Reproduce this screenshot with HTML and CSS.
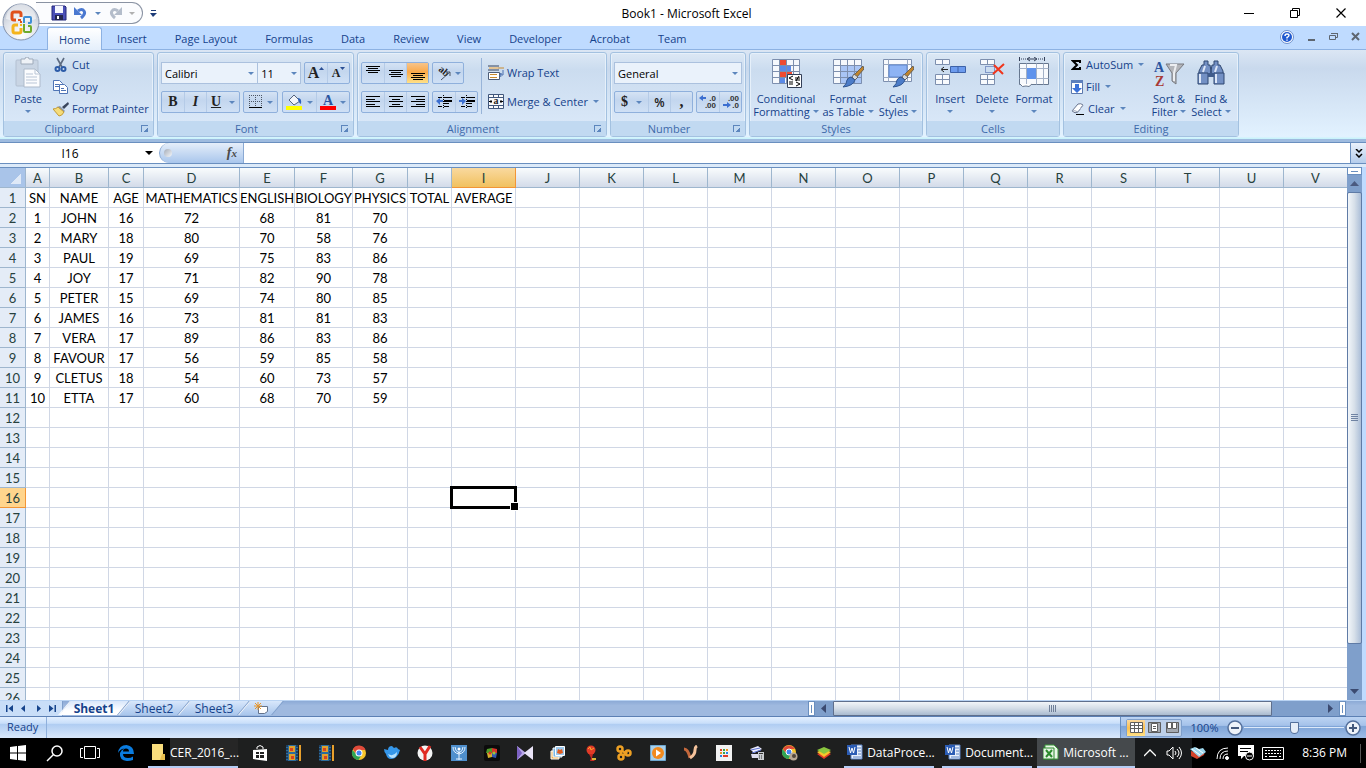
FILE: index.html
```html
<!DOCTYPE html>
<html lang="en">
<head>
    <meta charset="UTF-8">
    <title>Book1 - Microsoft Excel</title>
    <link rel="stylesheet" href="styles.css">
</head>
<body>
<header class="titlebar">
    <button class="office" aria-label="Office Button">
        <svg width="38" height="38" viewBox="0 0 38 38">
            <defs>
                <radialGradient id="orb" cx="50%" cy="85%" r="85%">
                    <stop offset="0" stop-color="#ffffff"/><stop offset=".55" stop-color="#dfe3ea"/><stop offset="1" stop-color="#b4bccb"/>
                </radialGradient>
            </defs>
            <circle cx="19" cy="19" r="18" fill="url(#orb)" stroke="#8492ab"/>
            <path d="M4 16a15 15 0 0 1 30 0q-15 5-30 0z" fill="#fff" opacity=".5"/>
            <g fill="none" stroke-width="3">
                <path d="M14 17h-2q-2 0-2-2v-4q0-2 2-2h5q2 0 2 2v3" stroke="#e0501a"/>
                <path d="M16 17h3" stroke="#e0501a" stroke-width="2"/>
                <path d="M22 18v-3q0-1 1-1h5q1 0 1 1v4q0 1-1 1h-2" stroke="#3f8fd6" stroke-width="2"/>
                <path d="M16 22h-3q-2 0-2 2v4q0 2 2 2h4q2 0 2-2v-3" stroke="#f4b41c"/>
                <path d="M22 23v5q0 1 1 1h5q1 0 1-1v-4q0-1-1-1h-2" stroke="#6fab2c" stroke-width="2"/>
            </g>
            <path d="M18 18h2v2h-2z" fill="#e0501a"/><path d="M21 18h2v2h-2z" fill="#3f8fd6"/><path d="M18 21h2v2h-2z" fill="#f4b41c"/><path d="M21 21h2v2h-2z" fill="#6fab2c"/>
        </svg>
    </button>
    <div class="qat">
        <button aria-label="Save">
            <svg width="16" height="16"><path d="M1 1h13l1 1v13H1z" fill="#4a4fb8" stroke="#25287a"/><path d="M4 1h8v7H4z" fill="#f4f6ff"/><path d="M4 10h8v5H4z" fill="#23264f"/><path d="M6 11h2v3H6z" fill="#fff"/></svg>
        </button>
        <button aria-label="Undo">
            <svg width="14" height="14"><path d="M4 5q4-3 6 0 2 3-3 7" fill="none" stroke="#4a78d0" stroke-width="3"/><path d="M0 1v8h8z" fill="#4a78d0"/></svg>
        </button>
        <i class="caret"></i>
        <button aria-label="Redo">
            <svg width="14" height="14"><path d="M10 5q-4-3-6 0-2 3 3 7" fill="none" stroke="#b4bdcb" stroke-width="3"/><path d="M14 1v8H6z" fill="#b4bdcb"/></svg>
        </button>
        <i class="caret off"></i>
    </div>
    <button class="customize" aria-label="Customize Quick Access Toolbar"><svg width="7" height="7"><path d="M1 0h5v1H1zM0 3h7L3 7z" fill="#1e3c78"/></svg></button>
    <h1>Book1 - Microsoft Excel</h1>
    <div class="winbtns">
        <button aria-label="Minimize"><svg width="11" height="11"><path d="M0 5.500h10" stroke="#000"/></svg></button>
        <button aria-label="Restore"><svg width="11" height="11" fill="none" stroke="#000"><path d="M.5 2.500h7v7h-7zM2.500 2.500v-2h7v7h-2"/></svg></button>
        <button aria-label="Close"><svg width="11" height="11"><path d="M.5.5l9 9M9.500.5l-9 9" stroke="#000" stroke-width="1.200"/></svg></button>
    </div>
</header>

<nav class="tabs">
    <a href="#" class="active">Home</a>
    <a href="#">Insert</a>
    <a href="#">Page Layout</a>
    <a href="#">Formulas</a>
    <a href="#">Data</a>
    <a href="#">Review</a>
    <a href="#">View</a>
    <a href="#">Developer</a>
    <a href="#">Acrobat</a>
    <a href="#">Team</a>
    <div class="docbtns">
        <button aria-label="Help"><svg width="14" height="14"><circle cx="7" cy="7" r="6.500" fill="#fff" stroke="#6d8fcb"/><circle cx="7" cy="7" r="5" fill="#2059cf"/><path d="M5 6q0-2 2-2t2 1.500q0 1-2 2v1M7 9.500v1.300" fill="none" stroke="#fff" stroke-width="1.400"/></svg></button>
        <button aria-label="Minimize workbook"><svg width="9" height="9"><path d="M1 7h7v2H1z" fill="#5e6670"/></svg></button>
        <button aria-label="Restore workbook"><svg width="9" height="9" fill="none" stroke="#5e6670"><path d="M.5 3.500h6v4h-6zM2.500 1.500h6v4h-2M2 1.500h7"/></svg></button>
        <button aria-label="Close workbook"><svg width="9" height="9"><path d="M1 1l7 7M8 1l-7 7" stroke="#5e6670" stroke-width="2"/></svg></button>
    </div>
</nav>

<div class="ribbon">
    <section class="group g-clipboard">
        <div class="body">
            <button class="big paste">
                <svg width="32" height="32"><rect x="4" y="3" width="22" height="26" rx="1" fill="#c9d5e4" stroke="#b3c0d1"/><path d="M9 2h4a2 2 0 0 1 4 0h4v5H9z" fill="#eef2f7" stroke="#9fabba"/><path d="M12 12h11l5 5v13H12z" fill="#fbfcfe" stroke="#adbacb"/><path d="M23 12v5h5M14 17h7M14 20h11M14 23h11M14 26h11" fill="none" stroke="#b9c5d6"/></svg>
                <span>Paste</span><i class="caret"></i>
            </button>
            <div class="stack">
                <button class="small"><svg width="16" height="16"><path d="M4 1l5 9M11 1L6 10" stroke="#5d6b80" stroke-width="1.600"/><g fill="none" stroke="#2d5ca8" stroke-width="2"><circle cx="4.500" cy="12" r="2"/><circle cx="10.500" cy="12" r="2"/></g></svg>Cut</button>
                <button class="small"><svg width="16" height="16" stroke="#4f74b5"><path d="M.5 1.500h6l3 3v7h-9z" fill="#fff"/><path d="M2 5.500h4M2 7.500h4" /><path d="M6.500 5.500h5l3 3v6h-8z" fill="#fff"/><path d="M8 9.500h3M8 11.500h5"/></svg>Copy</button>
                <button class="small"><svg width="16" height="16"><path d="M15 1l-6 5 2 2 5-5z" fill="#39455c"/><path d="M7 5l5 5-2 2-6-6z" fill="#8a97ad"/><path d="M5 6l6 5q-2 4-5 4L0 8q3 0 5-2z" fill="#f5dc7a" stroke="#c39b35"/></svg>Format Painter</button>
            </div>
        </div>
        <footer>Clipboard<button class="launch" aria-label="Clipboard options"></button></footer>
    </section>

    <section class="group g-font">
        <div class="body rows">
            <div class="row">
                <select class="pick name" aria-label="Font"><option>Calibri</option></select>
                <select class="pick size" aria-label="Font size"><option>11</option></select>
                <div class="set push">
                    <button class="serif lg">A<svg width="5" height="3"><path d="M0 3h5L2.500 0z" fill="#2b4f94"/></svg></button>
                    <button class="serif sm">A<svg width="5" height="3"><path d="M0 0h5L2.500 3z" fill="#2b4f94"/></svg></button>
                </div>
            </div>
            <div class="row">
                <div class="set">
                    <button class="serif">B</button>
                    <button class="serif"><em>I</em></button>
                    <button class="serif wide"><u>U</u><i class="caret"></i></button>
                </div>
                <div class="set">
                    <button class="wide" aria-label="Borders"><svg width="14" height="14"><path d="M.5 0v12M6.500 0v12M12.500 0v12M0 .5h13M0 6.500h13" stroke="#4c5664" stroke-dasharray="1 1"/><path d="M0 12h13v1H0z" fill="#000"/></svg><i class="caret"></i></button>
                </div>
                <div class="set push">
                    <button class="wide" aria-label="Fill color"><svg width="17" height="16"><path d="M3 6l5-5 6 6-6 4z" fill="#f2f5fa" stroke="#53647f"/><path d="M12 4q4 0 3 6-2-1-3-4z" fill="#2e62b8"/><path d="M0 12h16v4H0z" fill="#ffff00"/></svg><i class="caret"></i></button>
                    <button class="wide" aria-label="Font color"><svg width="16" height="16"><text x="8" y="11" text-anchor="middle" class="glyph blue">A</text><path d="M0 12h16v4H0z" fill="#ff0000"/></svg><i class="caret"></i></button>
                </div>
            </div>
        </div>
        <footer>Font<button class="launch" aria-label="Font options"></button></footer>
    </section>

    <section class="group g-align">
        <div class="body">
            <div class="rows aligns">
                <div class="row">
                    <div class="set">
                        <button aria-label="Top align"><svg width="14" height="16"><path d="M0 1.500h14M2 3.500h10M0 5.500h14M2 7.500h10" stroke="#000"/></svg></button>
                        <button aria-label="Middle align"><svg width="14" height="16"><path d="M0 5.500h14M2 7.500h10M0 9.500h14M2 11.500h10" stroke="#000"/></svg></button>
                        <button class="on" aria-label="Bottom align"><svg width="14" height="16"><path d="M0 8.500h14M2 10.500h10M0 12.500h14M2 14.500h10" stroke="#000"/></svg></button>
                    </div>
                    <div class="set">
                        <button class="orient" aria-label="Orientation"><svg width="18" height="18"><text x="3" y="10" class="glyph tiny" transform="rotate(40 8 8)">ab</text><path d="M6 16l9-8M15 8h-4M15 8v4" fill="none" stroke="#4c5664"/></svg><i class="caret"></i></button>
                    </div>
                </div>
                <div class="row">
                    <div class="set">
                        <button aria-label="Align left"><svg width="14" height="12"><path d="M0 .5h14M0 3.500h9M0 5.500h14M0 8.500h9M0 10.500h14" stroke="#000"/></svg></button>
                        <button aria-label="Center"><svg width="14" height="12"><path d="M0 .5h14M3 3.500h8M0 5.500h14M3 8.500h8M0 10.500h14" stroke="#000"/></svg></button>
                        <button aria-label="Align right"><svg width="14" height="12"><path d="M0 .5h14M5 3.500h9M0 5.500h14M5 8.500h9M0 10.500h14" stroke="#000"/></svg></button>
                    </div>
                    <div class="set">
                        <button aria-label="Decrease indent"><svg width="16" height="14"><path d="M2 2.500h4M8 2.500h8M2 11.500h4M8 11.500h5M8 8.500h5" stroke="#000"/><path d="M8 5h8v2H8z"/><path d="M7.500 0v14" stroke="#000" stroke-dasharray="1 1"/><path d="M4 3L0 6l4 4V7h3V5H4z" fill="#3c6fd0"/></svg></button>
                        <button aria-label="Increase indent"><svg width="16" height="14"><path d="M2 2.500h4M8 2.500h8M2 11.500h4M8 11.500h5M8 8.500h5" stroke="#000"/><path d="M8 5h8v2H8z"/><path d="M7.500 0v14" stroke="#000" stroke-dasharray="1 1"/><path d="M3 3l4 3-4 4V7H0V5h3z" fill="#3c6fd0"/></svg></button>
                    </div>
                </div>
            </div>
            <div class="rows">
                <button class="small"><svg width="16" height="16"><path d="M0 1h11M0 5h11" stroke="#39455c"/><path d="M1 2h9v2H1z" fill="#fff"/><path d="M1 3h15" stroke="#c98a2d"/><path d="M.5 7.500h11v7H.5z" fill="#fff" stroke="#4d5d78"/><path d="M2 9.500h7M2 12.500h7" stroke="#c98a2d"/><path d="M15 5v5h-2l0-2-1 2 1 2" fill="none" stroke="#4a6fae"/></svg>Wrap Text</button>
                <button class="small"><svg width="16" height="16"><path d="M.5.5h15v14H.5zM.5 3.500h15M.5 11.500h15M5.500.5v3M10.500.5v3M5.500 11.500v3M10.500 11.500v3" fill="#f7f9fc" stroke="#41577c"/><path d="M1 7.500h3M12 7.500h3M3 6v3M13 6v3" stroke="#000"/><text x="8" y="10" text-anchor="middle" class="glyph tiny">a</text></svg>Merge &amp; Center<i class="caret"></i></button>
            </div>
        </div>
        <footer>Alignment<button class="launch" aria-label="Alignment options"></button></footer>
    </section>

    <section class="group g-number">
        <div class="body rows">
            <div class="row"><select class="pick format" aria-label="Number format"><option>General</option></select></div>
            <div class="row">
                <div class="set">
                    <button class="serif wide">$<i class="caret"></i></button>
                    <button class="pct">%</button>
                    <button class="serif lg">,</button>
                </div>
                <div class="set push">
                    <button aria-label="Increase decimal"><svg width="18" height="20"><path d="M4 3L0 6l4 3V7h3V5H4z" fill="#3c6fd0"/><text x="17" y="9" text-anchor="end" class="dec">.0</text><text x="17" y="16" text-anchor="end" class="dec">.00</text></svg></button>
                    <button aria-label="Decrease decimal"><svg width="18" height="20"><path d="M5 10l4 3-4 3v-2H1v-2h4z" fill="#3c6fd0"/><text x="17" y="9" text-anchor="end" class="dec">.00</text><text x="17" y="16" text-anchor="end" class="dec">.0</text></svg></button>
                </div>
            </div>
        </div>
        <footer>Number<button class="launch" aria-label="Number options"></button></footer>
    </section>

    <section class="group g-styles">
        <div class="body">
            <button class="big cond">
                <svg width="32" height="32"><path d="M3 3h27v24H3z" fill="#f5f8fc"/><path d="M10 3h6v6h-6zM10 15h12v6H10z" fill="#ee4b32"/><path d="M10 9h11v6H10zM10 21h5v6h-5z" fill="#5b8be8"/><path d="M2.500 2.500h27v24h-27zM2.500 8.500h27M2.500 14.500h27M2.500 20.500h27M9.500 2.500v24M16.500 2.500v24M23.500 2.500v24" fill="none" stroke="#7d8fae"/><path d="M17.500 17.500h14v13h-14z" fill="#fff" stroke="#333f57"/><path d="M23 19l-4 2 4 2M19 25h4M19 27h4M25 21h5M25 23h5M29 19l-3 5M26 25l4 2-4 2" fill="none" stroke="#000"/></svg>
                <span>Conditional<br>Formatting<i class="caret"></i></span>
            </button>
            <button class="big fmt">
                <svg width="32" height="32"><path d="M2 3h28v24H2z" fill="#f5f8fc"/><path d="M9 9h21v18H9z" fill="#a9c5f5"/><path d="M1.500 2.500h28v24h-28zM1.500 8.500h28M1.500 14.500h28M1.500 20.500h28M8.500 2.500v24M15.500 2.500v24M22.500 2.500v24" fill="none" stroke="#7d8fae"/><path d="M31 9l1 3-8 9-3-2z" fill="#c0842b" stroke="#6d6250"/><path d="M22 17l4 3-3 3-3-3z" fill="#d7d7d7" stroke="#666"/><path d="M19 20l4 3q-2 6-12 7 4-3 4-7 2-3 4-3z" fill="#4c7cc8" stroke="#2f5591"/></svg>
                <span>Format<br>as Table<i class="caret"></i></span>
            </button>
            <button class="big cellst">
                <svg width="32" height="32"><path d="M1.500 2.500h28v22h-28z" fill="#f8fafd" stroke="#7d8fae"/><path d="M1.500 7.500h28M1.500 20.500h28M6.500 2.500v22M25.500 2.500v22" stroke="#9aa9c2"/><path d="M7 8h18v12H7z" fill="#8db3f4" stroke="#5f86cc"/><path d="M31 9l1 3-8 9-3-2z" fill="#c0842b" stroke="#6d6250"/><path d="M22 17l4 3-3 3-3-3z" fill="#d7d7d7" stroke="#666"/><path d="M19 20l4 3q-2 6-12 7 4-3 4-7 2-3 4-3z" fill="#4c7cc8" stroke="#2f5591"/></svg>
                <span>Cell<br>Styles<i class="caret"></i></span>
            </button>
        </div>
        <footer>Styles</footer>
    </section>

    <section class="group g-cells">
        <div class="body">
            <button class="big">
                <svg width="32" height="32" fill="#f8fafd" stroke="#7d8fae"><path d="M1.500 2.500h14v5h-14zM8.500 2.500v5M1.500 17.500h14v10h-14zM1.500 22.500h14M8.500 17.500v10"/><path d="M16.500 9.500h15v6h-15zM24 9.500v6" fill="#6c9bee" stroke="#3d62a8"/><path d="M14 12.500H8M10 10l-3 2.500 3 2.500" fill="none" stroke="#222"/></svg>
                <span>Insert</span><i class="caret"></i>
            </button>
            <button class="big">
                <svg width="32" height="32" fill="#f8fafd" stroke="#7d8fae"><path d="M4.500 2.500h14v5h-14zM11.500 2.500v5M4.500 17.500h14v10h-14zM4.500 22.500h14M11.500 17.500v10"/><path d="M9.500 9.500h9v6h-9z" fill="none" stroke="#3550a0" stroke-dasharray="1 1"/><path d="M18 8l9 9M28 7L17 17" stroke="#f0351c" stroke-width="2"/></svg>
                <span>Delete</span><i class="caret"></i>
            </button>
            <button class="big">
                <svg width="32" height="32"><path d="M1.500 0v4M26.500 0v4M10 2h8M12 0l-3 2 3 2M16 0l3 2-3 2" fill="none" stroke="#333f57"/><path d="M3 2h6M20 2h6" stroke="#333f57" stroke-dasharray="1 1"/><path d="M1.500 6.500h29v21h-29z" fill="#f8fafd" stroke="#66778f"/><path d="M1.500 11.500h29M1.500 21.500h29M8.500 6.500v21M18.500 6.500v21M25.500 6.500v21" stroke="#a3b1c7"/><path d="M9 11h9v11H9z" fill="#5f93ec"/><path d="M2 27q2 4 6 2 3 2 6-2" fill="#fff" stroke="#66778f"/></svg>
                <span>Format</span><i class="caret"></i>
            </button>
        </div>
        <footer>Cells</footer>
    </section>

    <section class="group g-edit">
        <div class="body">
            <div class="stack">
                <button class="small"><svg width="12" height="14"><path d="M9 5V3H2l4 4-4 4h7V9" fill="none" stroke="#000" stroke-width="2"/></svg>AutoSum<i class="caret"></i></button>
                <button class="small"><svg width="12" height="16"><path d="M.5 1.500h11v13H.5z" fill="#fff" stroke="#5b78ad"/><path d="M0 1h12v3H0z" fill="#5d80bd"/><path d="M4 5h4v4h3l-5 5-5-5h3z" fill="#3c72d8"/></svg>Fill<i class="caret"></i></button>
                <button class="small"><svg width="14" height="16"><path d="M1 10l6-7q3-1 5 1l-5 7q-3 2-6-1z" fill="#fff" stroke="#6a7690"/><path d="M1 10q3-1 6 1l5-7" fill="none" stroke="#9aa6bb"/><path d="M5 13.500h8" stroke="#000"/></svg>Clear<i class="caret"></i></button>
            </div>
            <button class="big">
                <svg width="32" height="32"><path d="M13 7h18l-8 9v11l-4-3v-8z" fill="#b3b5ba" stroke="#77797f"/><path d="M17 8h6l-2 8v8" fill="none" stroke="#eceef1" stroke-width="2"/><text x="1" y="15" class="glyph blue">A</text><text x="2" y="29" class="glyph red">Z</text></svg>
                <span>Sort &amp;<br>Filter<i class="caret"></i></span>
            </button>
            <button class="big">
                <svg width="32" height="32"><g fill="#7390c4" stroke="#2f4770"><path d="M9 4h4v4h2l1 6v4H4v-4l3-6h2zM19 4h4v4h2l3 6v4H16v-4l1-6h2z"/><path d="M3 16h10v11H3zM19 16h10v11H19z"/></g><path d="M5 17v9M21 17v9M10 9l-2 6M22 9l-2 6" stroke="#dde7f8" stroke-width="2"/><path d="M13 16h6v4h-6z" fill="#3f5b8c"/></svg>
                <span>Find &amp;<br>Select<i class="caret"></i></span>
            </button>
        </div>
        <footer>Editing</footer>
    </section>
</div>

<div class="formulabar">
    <div class="namebox">
        <input type="text" value="I16" aria-label="Name Box">
        <svg width="8" height="5"><path d="M0 0h8L4 4z"/></svg>
    </div>
    <div class="fxwrap"><i class="knob"></i><button class="fx">f<sub>x</sub></button></div>
    <input type="text" class="formula" aria-label="Formula Bar">
    <button class="expand" aria-label="Expand Formula Bar"><svg width="8" height="9" fill="none" stroke="#000" stroke-width="1.500"><path d="M1 0l3 3 3-3M1 5l3 3 3-3"/></svg></button>
</div>

<main class="work">
    <div class="sheet"><table id="grid"></table></div>
    <div class="vscroll">
        <i class="split"></i>
        <button aria-label="Scroll up"><svg width="9" height="5"><path d="M0 5h9L4.500 0z" fill="#4a5a80"/></svg></button>
        <div class="track"><div class="thumb"></div></div>
        <button aria-label="Scroll down"><svg width="9" height="5"><path d="M0 0h9L4.500 5z" fill="#3b4a70"/></svg></button>
    </div>
</main>

<div class="sheetbar">
    <div class="sheetnav">
        <button aria-label="First sheet"><svg width="7" height="7"><path d="M0 0h1.500v7H0zM7 0v7L2.500 3.500z"/></svg></button>
        <button aria-label="Previous sheet"><svg width="7" height="7"><path d="M5 0v7L1 3.500z"/></svg></button>
        <button aria-label="Next sheet"><svg width="7" height="7"><path d="M2 0v7l4-3.500z"/></svg></button>
        <button aria-label="Last sheet"><svg width="7" height="7"><path d="M5.500 0H7v7H5.500zM0 0v7l4.500-3.500z"/></svg></button>
    </div>
    <div class="sheettabs">
        <button class="current">Sheet1</button>
        <button>Sheet2</button>
        <button>Sheet3</button>
        <button class="new" aria-label="Insert Worksheet"><svg width="15" height="13"><path d="M4.500 4.500h9v5l-3 2h-6z" fill="#fff" stroke="#63728c"/><path d="M4 0v8M0 4h8M1 1l6 6M7 1L1 7" stroke="#e8962a"/></svg></button>
    </div>
    <div class="hscroll">
        <i class="split"></i>
        <button aria-label="Scroll left"><svg width="5" height="9"><path d="M5 0v9L0 4.500z" fill="#3b4a70"/></svg></button>
        <div class="track"><div class="thumb"></div></div>
        <button aria-label="Scroll right"><svg width="5" height="9"><path d="M0 0v9l5-4.500z" fill="#3b4a70"/></svg></button>
        <i class="split"></i>
    </div>
</div>

<div class="status">
    <span class="ready">Ready</span>
    <div class="zoombar">
        <div class="views">
            <button class="on" aria-label="Normal"><svg width="13" height="11"><path d="M.5.5h12v10H.5zM.5 3.500h12M.5 6.500h12M4.500.5v10M8.500.5v10" fill="#fff" stroke="#5f5f5f"/></svg></button>
            <button aria-label="Page Layout view"><svg width="13" height="11"><path d="M.5.5h12v10H.5z" fill="#a4a9b0" stroke="#5f5f5f"/><path d="M3.500 1.500h6v8h-6z" fill="#fff" stroke="#5f5f5f"/><path d="M5 4.500h3M5 6.500h3" stroke="#5f5f5f"/></svg></button>
            <button aria-label="Page Break Preview"><svg width="13" height="11"><path d="M.5.5h12v10H.5z" fill="#a4a9b0" stroke="#5f5f5f"/><path d="M1.500.5h4v6h-4zM6.500.5h4v6h-4z" fill="#fff" stroke="#5f5f5f"/></svg></button>
        </div>
        <span class="pctlabel">100%</span>
        <button class="round" aria-label="Zoom out"><svg width="16" height="16"><circle cx="8" cy="8" r="7" fill="#eef3fa" stroke="#54709c" stroke-width="1.500"/><path d="M4 8h8" stroke="#44597c" stroke-width="2"/></svg></button>
        <input type="range" min="10" max="190" value="100" aria-label="Zoom">
        <button class="round" aria-label="Zoom in"><svg width="16" height="16"><circle cx="8" cy="8" r="7" fill="#eef3fa" stroke="#54709c" stroke-width="1.500"/><path d="M4 8h8M8 4v8" stroke="#44597c" stroke-width="2"/></svg></button>
    </div>
</div>

<div class="taskbar">
    <div class="start">
        <button aria-label="Start"><svg width="16" height="16" fill="#fff"><path d="M0 2l7-1v6.500H0zM8 1l8-1v7.500H8zM0 8.500h7V15l-7-1zM8 8.500h8V16l-8-1z"/></svg></button>
        <button aria-label="Search"><svg width="17" height="17" fill="none" stroke="#fff" stroke-width="1.500"><circle cx="11" cy="6" r="5"/><path d="M7.500 9.500L1 16"/></svg></button>
        <button aria-label="Task View"><svg width="20" height="16" fill="none" stroke="#fff"><path d="M4.500 1.500h11v12h-11zM3 3.500H.5v9H3M17 3.500h2.500v9H17"/></svg></button>
        <button aria-label="Edge"><svg width="16" height="16"><path d="M0 8Q1 0 8.500 0 16 1 16 9H5q0 4 5 4 3 0 5-1.500V15q-3 1-6 1-8-1-7-8 1-3 4-4.500Q2 4 0 8zM5 6.500h6Q11 3.500 8 3.500T5 6.500z" fill="#0a7ce0"/></svg></button>
    </div>
    <button class="task folder"><svg width="15" height="18"><path d="M1 1h11v11h2v5H1z" fill="#f8dc7c"/><path d="M11 11h3v6H9z" fill="#e9bf4e"/></svg><span>CER_2016_...</span></button>
    <div class="pins">
        <button aria-label="Store"><svg width="16" height="16"><path d="M1 5l14-1v12L1 14z" fill="#fff"/><path d="M5 4V2q3-3 6 0v2" fill="none" stroke="#fff"/><path d="M4 7h3v2H4zM8 7h4v2H8zM4 10h3v3H4zM8 10h4v3H8z" fill="#222"/></svg></button>
        <button aria-label="Video"><svg width="16" height="16"><path d="M1 0h12v16H1z" fill="#2c6c9c"/><path d="M4 1h6v6H4zM4 9h6v6H4z" fill="#e0a02c"/><path d="M5 3h3v3H5zM6 11h3v3H6z" fill="#d8421f"/><path d="M2 0v16M12 0v16" stroke="#112" stroke-dasharray="2 1"/><path d="M14 0h2v16h-2z" fill="#e8a02c"/></svg></button>
        <button aria-label="Video"><svg width="16" height="16"><path d="M1 0h12v16H1z" fill="#2c6c9c"/><path d="M4 1h6v6H4zM4 9h6v6H4z" fill="#e0a02c"/><path d="M5 3h3v3H5zM6 11h3v3H6z" fill="#d8421f"/><path d="M2 0v16M12 0v16" stroke="#112" stroke-dasharray="2 1"/><path d="M14 0h2v16h-2z" fill="#e8a02c"/></svg></button>
        <button aria-label="Chrome"><svg width="16" height="16"><circle cx="8" cy="8" r="7" fill="#f7c52c"/><path d="M2 4a7 7 0 0 1 12.500 1H8L5 9z" fill="#e04a3a"/><path d="M1.500 5a7 7 0 0 0 6 10l3-5H6z" fill="#2fa455"/><circle cx="8" cy="8" r="3.500" fill="#fff"/><circle cx="8" cy="8" r="2.500" fill="#4285f4"/></svg></button>
        <button aria-label="Bird"><svg width="16" height="14"><path d="M0 3l4 1q0-4 4-4l2 2q3-2 4 1l2 1q-1 4-3 6-2 3-6 3-4 0-5-5-2-2-2-5z" fill="#3597ea"/><path d="M4 8q5 3 9-2 0 6-5 6-3-1-4-4z" fill="#b6e2ff"/></svg></button>
        <button aria-label="Yandex"><svg width="16" height="16"><circle cx="8" cy="8" r="7.500" fill="#f4f4f4"/><path d="M3 2l5 7v7M13 1L8 9" fill="none" stroke="#e02a22" stroke-width="3"/></svg></button>
        <button aria-label="Angel"><svg width="16" height="16"><path d="M0 0h16v16H0z" fill="#4f8fcc"/><path d="M2 2q0 6 6 7 6-1 6-7M4 2q0 4 4 6 4-2 4-6M8 6v9M5 14h6" fill="none" stroke="#e5f2ff"/><circle cx="8" cy="4" r="1.500" fill="#fff"/></svg></button>
        <button aria-label="Puzzle"><svg width="16" height="16"><rect width="16" height="16" rx="2" fill="#0b0b0b"/><path d="M3 4l5-1v5H2z" fill="#4f9b2c"/><path d="M8 3l5 1v4H8z" fill="#d9352a"/><path d="M3 8h5v4l-4 1z" fill="#d6b02e"/><path d="M8 8h5l-1 5-4-1z" fill="#3458b2"/><circle cx="6" cy="8" r="1.500" fill="#d9352a"/><circle cx="10" cy="8" r="1.500" fill="#9ac93c"/></svg></button>
        <button aria-label="Media Player"><svg width="16" height="14"><path d="M0 0l9 7-9 7z" fill="#b9a8e8"/><path d="M16 0L7 7l9 7z" fill="#e9e4f7"/><path d="M0 0l5 7-5 7z" fill="#7d62c4"/></svg></button>
        <button aria-label="Pictures"><svg width="16" height="16"><path d="M1 6h8v8H1z" fill="#f0b050" stroke="#fff"/><path d="M3 3h9v9H3z" fill="#77b5e4" stroke="#fff"/><path d="M5.500 1.500h9v9h-9z" fill="#9cc8ec" stroke="#fff"/><path d="M7 8l1-4 2 1 2-1 1 4-3 1z" fill="#e25a1c"/></svg></button>
        <button aria-label="Balloon"><svg width="12" height="16"><circle cx="6" cy="5" r="4.500" fill="#e23a27"/><path d="M3 4l2-2 1 3 3-2" fill="none" stroke="#f7a62c"/><path d="M4 9h4l-1 4 3 3H5l1-3z" fill="#c52a20"/><path d="M7 13h4v2H7z" fill="#d9b93a"/></svg></button>
        <button aria-label="Keys"><svg width="16" height="16" fill="none" stroke="#eda024" stroke-width="2.500"><circle cx="4" cy="4" r="2.500"/><circle cx="12" cy="8" r="2.500"/><circle cx="5" cy="12" r="2.500"/><path d="M6 6l4 2-4 3M5 6v4"/></svg></button>
        <button aria-label="Windows Media Player"><svg width="16" height="16"><path d="M.5.5h15v15H.5z" fill="#a9cfe9" stroke="#6da7cf"/><circle cx="8" cy="8" r="6" fill="#f28a1e"/><path d="M6 4.500v7l5-3.500z" fill="#fff"/></svg></button>
        <button aria-label="V"><svg width="16" height="16"><path d="M1 4q4 0 6 9" fill="none" stroke="#c4683c" stroke-width="3"/><path d="M7 13q5-3 5-8 0-3 2-4" fill="none" stroke="#f5c39c" stroke-width="3"/></svg></button>
        <button aria-label="Apps"><svg width="16" height="16"><path d="M0 0h16v16H0z" fill="#f2f2f2"/><path d="M4 5h2" stroke="#e23a27" stroke-width="2"/><path d="M7 5h2M7 8h2" stroke="#3aa648" stroke-width="2"/><path d="M10 5h2M4 8h2" stroke="#f0931e" stroke-width="2"/><path d="M10 8h2M4 11h2" stroke="#2d7fe0" stroke-width="2"/><path d="M7 11h5" stroke="#e23a27" stroke-width="2"/></svg></button>
        <button aria-label="Accounts"><svg width="16" height="16"><path d="M1 4l8-3 4 3-8 4z" fill="#eef"/><path d="M2 5l9-2M3 8l9-3M3 11h5" stroke="#5a6fd0"/><path d="M2 9h7v4H3z" fill="#dde"/><path d="M9 7h6v8H9z" fill="#c9ccd0"/><path d="M10 8.500h4M10 11h1M12 11h1M10 13h1M12 13h1" stroke="#333"/></svg></button>
        <button aria-label="Chrome profile"><svg width="16" height="16"><circle cx="7" cy="7" r="7" fill="#f7c52c"/><path d="M1 4a7 7 0 0 1 12 0H7L4 8z" fill="#e04a3a"/><path d="M.5 4a7 7 0 0 0 6 10l3-5H5z" fill="#2fa455"/><circle cx="7" cy="7" r="3" fill="#4285f4" stroke="#fff"/><circle cx="11.500" cy="11.500" r="4" fill="#b8a794"/><circle cx="12" cy="11" r="2" fill="#54473c"/></svg></button>
        <button aria-label="BlueStacks"><svg width="16" height="14"><path d="M1 8l7 5 7-5-7-3z" fill="#e23a27"/><path d="M1 6l7 5 7-5-7-3z" fill="#f6c52c"/><path d="M1 4l7-3 7 3-7 4z" fill="#8ac63f"/></svg></button>
    </div>
    <button class="task"><svg width="16" height="16"><path d="M4 1h11v14H4z" fill="#e9f0fb" stroke="#5b82c4"/><path d="M9 4h5M11 7h3M11 10h3M6 13h8" stroke="#5b82c4"/><path d="M0 1h10v10H0z" fill="#2b5cb4"/><path d="M2 3l1.500 6L5 4l1.500 5L8 3" fill="none" stroke="#fff"/></svg><span>DataProce...</span></button>
    <button class="task"><svg width="16" height="16"><path d="M4 1h11v14H4z" fill="#e9f0fb" stroke="#5b82c4"/><path d="M9 4h5M11 7h3M11 10h3M6 13h8" stroke="#5b82c4"/><path d="M0 1h10v10H0z" fill="#2b5cb4"/><path d="M2 3l1.500 6L5 4l1.500 5L8 3" fill="none" stroke="#fff"/></svg><span>Document...</span></button>
    <button class="task front"><svg width="16" height="16"><path d="M2 1h9l4 4v10H2z" fill="#eaf6e8" stroke="#3d9a3b"/><path d="M0 4h11v11H0z" fill="#e5f4e3" stroke="#2c8a2d"/><path d="M3 6l6 7M9 6l-6 7" stroke="#2c8a2d" stroke-width="2"/></svg><span>Microsoft ...</span></button>
    <div class="tray">
        <button aria-label="Show hidden icons"><svg width="12" height="8" fill="none" stroke="#fff" stroke-width="1.300"><path d="M0 7l6-6 6 6"/></svg></button>
        <button aria-label="Volume"><svg width="17" height="14" fill="none" stroke="#fff"><path d="M1 5h2l4-4v12L3 9H1zM9 5q2 2 0 4M11 3q4 4 0 8M13 1q5 6 0 12"/></svg></button>
        <button aria-label="Dictionary"><svg width="16" height="14"><path d="M1 5l7 2 7-2-1 4-7 4-6-3z" fill="#d4442c"/><path d="M0 3l5-2 4 2 4-1 3 4-7 5z" fill="#9fd8ee"/><path d="M2 3l8 6M6 2l7 5" stroke="#fff"/></svg></button>
        <button aria-label="Network"><svg width="13" height="13" fill="none" stroke="#fff"><path d="M1 12Q1 1 12 1M4 12q0-8 8-8M7 12q0-5 5-5"/><circle cx="11" cy="11" r="1.500" fill="#fff"/></svg></button>
        <button aria-label="Notifications"><svg width="16" height="16"><path d="M0 0h16v11H6l-3 3v-3H0z" fill="#fff"/><path d="M2 3.500h11M2 6.500h8" stroke="#000"/><circle cx="11.500" cy="11" r="4" fill="#000" stroke="#fff"/><path d="M9 11h5" stroke="#fff"/></svg></button>
        <button class="kbd" aria-label="Keyboard"><svg width="22" height="13" fill="none" stroke="#fff"><path d="M.5.5h21v12H.5z"/><path d="M3 3.500h16M3 6.500h16" stroke-dasharray="2 1"/><path d="M3 9.500h2M7 9.500h8M17 9.500h2"/></svg></button>
        <time>8:36 PM</time>
    </div>
</div>

<script>
    var columns = "ABCDEFGHIJKLMNOPQRSTUV".split("");
    var widths = [24, 59, 35, 96, 55, 58, 55, 44]; // the rest keep the default width
    var rows = [
        ["SN", "NAME", "AGE", "MATHEMATICS", "ENGLISH", "BIOLOGY", "PHYSICS", "TOTAL", "AVERAGE"],
        [1, "JOHN", 16, 72, 68, 81, 70],
        [2, "MARY", 18, 80, 70, 58, 76],
        [3, "PAUL", 19, 69, 75, 83, 86],
        [4, "JOY", 17, 71, 82, 90, 78],
        [5, "PETER", 15, 69, 74, 80, 85],
        [6, "JAMES", 16, 73, 81, 81, 83],
        [7, "VERA", 17, 89, 86, 83, 86],
        [8, "FAVOUR", 17, 56, 59, 85, 58],
        [9, "CLETUS", 18, 54, 60, 73, 57],
        [10, "ETTA", 17, 60, 68, 70, 59]
    ];
    var selCol = "I";
    var selRow = 16;

    var html = "<colgroup><col class='rowcol'>";
    columns.forEach(function (c, i) {
        html += "<col style='width:" + (widths[i] || 64) + "px'>";
    });
    html += "</colgroup><thead><tr><th class='corner'></th>";
    columns.forEach(function (c) {
        html += "<th scope='col'" + (c == selCol ? " class='sel'" : "") + ">" + c + "</th>";
    });
    html += "</tr></thead><tbody>";
    for (var r = 1; r <= 26; r++) {
        html += "<tr><th scope='row'" + (r == selRow ? " class='sel'" : "") + ">" + r + "</th>";
        columns.forEach(function (c, i) {
            var data = rows[r - 1] || [];
            var value = data[i] === undefined ? "" : data[i];
            html += "<td" + (r == selRow && c == selCol ? " class='cursor'" : "") + ">" + value + "</td>";
        });
        html += "</tr>";
    }
    document.getElementById("grid").innerHTML = html + "</tbody>";
</script>
</body>
</html>
```
FILE: styles.css
```css
* {
    box-sizing: border-box;
}

body {
    margin: 0;
    height: 100vh;
    display: flex;
    flex-direction: column;
    overflow: hidden;
    background: #bfdbff;
    font-family: "Open Sans", "Noto Sans", sans-serif;
    font-size: 11px;
    color: #15428b;
}

button, input, select {
    font: inherit;
    color: inherit;
    margin: 0;
    padding: 0;
    border: 0;
    background: none;
}

button {
    display: flex;
    align-items: center;
    justify-content: center;
}

svg {
    flex: none;
    display: block;
}

.caret {
    flex: none;
    display: inline-block;
    border: 3px solid transparent;
    border-top-color: #5c86bd;
    border-bottom: 0;
}

.caret.off {
    border-top-color: #b0b0b0;
}

/* Title bar */
.titlebar {
    position: relative;
    display: flex;
    align-items: center;
    height: 26px;
    flex: none;
    background: #fff;
}

.office {
    position: absolute;
    left: 2px;
    top: 3px;
    z-index: 2;
}

.qat {
    display: flex;
    align-items: center;
    gap: 7px;
    height: 22px;
    margin-left: 36px;
    padding: 0 7px 0 15px;
    border: 1px solid #8a93a3;
    border-left: 0;
    border-radius: 0 11px 11px 0;
    background: #fbfcfe;
}

.customize {
    margin-left: 7px;
}

h1 {
    flex: 1;
    margin: 0;
    padding-right: 10px;
    font-size: 12px;
    font-weight: normal;
    text-align: center;
    color: #000;
}

.winbtns {
    display: flex;
    padding-right: 2px;
}

.winbtns button {
    width: 46px;
    height: 24px;
}

/* Ribbon tabs */
.tabs {
    display: flex;
    flex: none;
    height: 24px;
    padding-left: 46px;
    background: #bfdbff;
    border-bottom: 1px solid #8db2e3;
}

.tabs a {
    height: 24px;
    padding: 0 14px;
    line-height: 25px;
    color: #15428b;
    text-decoration: none;
}

.tabs a.active {
    margin: 1px 1px 0;
    padding: 0 11px;
    line-height: 23px;
    background: linear-gradient(#fff, #e3eefb);
    border: 1px solid #8db2e3;
    border-bottom: 0;
    border-radius: 3px 3px 0 0;
}

.docbtns {
    display: flex;
    gap: 13px;
    margin-left: auto;
    padding: 0 6px 2px 0;
}

/* Ribbon */
.ribbon {
    display: flex;
    flex: none;
    gap: 3px;
    height: 92px;
    padding: 2px 3px 5px;
    background: linear-gradient(#dbe6f4, #c9d9ed 20%, #e2f2ff 94%, #c0f4fa 97%, #9ebbdf 97%);
}

.group {
    display: flex;
    flex-direction: column;
    flex: none;
    border: 1px solid #a3c1e0;
    border-radius: 3px;
    background: linear-gradient(#dce8f5, #cbdcef 20%, #dceafa);
    box-shadow: inset 0 0 0 1px #e6f0fa;
}

.g-clipboard { width: 151px; }
.g-font { width: 197px; }
.g-align { width: 250px; }
.g-number { width: 136px; }
.g-styles { width: 174px; }
.g-cells { width: 134px; }
.g-edit { width: 176px; }

.body {
    display: flex;
    flex: 1;
    padding: 0 3px;
}

.group footer {
    position: relative;
    height: 15px;
    line-height: 15px;
    text-align: center;
    background: #c1d9f1;
    color: #3e6aaa;
}

.g-clipboard footer, .g-font footer, .g-align footer, .g-number footer {
    padding-right: 18px;
}

.launch {
    position: absolute;
    right: 5px;
    top: 4px;
    width: 7px;
    height: 7px;
    border-top: 1px solid #5c86bd;
    border-left: 1px solid #5c86bd;
    background: linear-gradient(135deg, transparent 60%, #5c86bd 60%);
}

.rows {
    display: flex;
    flex-direction: column;
    gap: 7px;
}

.body.rows {
    padding: 9px 3px 0;
}

.aligns {
    padding: 9px 3px 0 0;
}

.row {
    display: flex;
    gap: 3px;
}

.set {
    display: flex;
    height: 22px;
    border: 1px solid #8fb0dc;
    border-radius: 2px;
    background: linear-gradient(#d5e3f4, #c3d6ee 40%, #cfe0f5);
}

.set button {
    width: 22px;
    gap: 4px;
}

.set button + button {
    border-left: 1px solid #b5cbe7;
}

.set .wide {
    width: 33px;
}

.set .orient {
    width: 30px;
    gap: 2px;
}

.push {
    margin-left: auto;
}

.set .on {
    background: linear-gradient(#f6c48b, #fba948 45%, #ffe187);
}

.set .serif {
    gap: 0;
    font-family: "Liberation Serif", serif;
    font-size: 14px;
    font-weight: bold;
    color: #222;
}

.serif svg {
    align-self: flex-start;
    margin-top: 4px;
}

.set .serif.wide {
    gap: 8px;
}

.set .serif.lg {
    font-size: 16px;
}

.set .serif.sm {
    font-size: 12px;
}

.pct {
    color: #222;
    font-size: 12px;
    font-weight: 600;
}

.pick {
    height: 22px;
    padding: 0 3px;
    appearance: none;
    border: 1px solid #abc1de;
    border-radius: 0;
    color: #000;
    background: #eaf2fb url("data:image/svg+xml,%3Csvg xmlns='http://www.w3.org/2000/svg' width='6' height='3'%3E%3Cpath d='M0 0h6L3 3z' fill='%235c86bd'/%3E%3C/svg%3E") no-repeat right 3px center;
}

.pick.name { width: 98px; }
.pick.size { width: 44px; margin-left: -4px; }
.pick.format { width: 100%; }

.glyph {
    font: bold 14px "Liberation Serif", serif;
    fill: #222;
}

.glyph.tiny { font-size: 10px; }
.glyph.blue { fill: #2b559f; }
.glyph.red { fill: #a83a36; }

.dec {
    font: bold 8px "Liberation Sans", sans-serif;
    fill: #333;
}

.aligns + .rows {
    margin-top: 5px;
    height: 56px;
    padding: 4px 0 0 6px;
    border-left: 1px solid #98b4d8;
}

.small {
    justify-content: flex-start;
    gap: 3px;
    height: 22px;
    padding-bottom: 1px;
    white-space: nowrap;
}

.small .caret {
    margin-left: 2px;
}

.stack {
    display: flex;
    flex-direction: column;
    padding: 1px 0 0 4px;
}

.big {
    flex-direction: column;
    justify-content: flex-start;
    width: 42px;
    padding-top: 4px;
    line-height: 13px;
    text-align: center;
    white-space: nowrap;
}

.big span {
    margin-top: 3px;
}

.big > .caret {
    margin-top: 5px;
}

.big span .caret {
    margin: 0 0 3px 3px;
}

.big.cond { width: 66px; }
.big.fmt { width: 58px; }

.g-cells .body {
    padding: 0 2px;
}

.g-edit .stack {
    width: 81px;
}

/* Formula bar */
.formulabar {
    display: flex;
    flex: none;
    height: 22px;
    border: 1px solid #6a8fbf;
    border-width: 1px 0;
    background: #fff;
    color: #000;
}

.namebox {
    display: flex;
    align-items: center;
    width: 159px;
    padding-right: 6px;
}

.namebox input {
    flex: 1;
    min-width: 0;
    padding-right: 5px;
    font-size: 12px;
    text-align: center;
}

.fxwrap {
    display: flex;
    align-items: center;
    justify-content: space-between;
    width: 85px;
    padding: 0 6px 0 4px;
    border: 1px solid #8aa9d3;
    border-width: 0 1px;
    border-radius: 10px 0 0 10px;
    background: linear-gradient(#e5eefa, #a9c6ec);
}

.knob {
    width: 8px;
    height: 8px;
    border-radius: 50%;
    background: linear-gradient(135deg, #a5acb8, #f5f7fa);
}

.fx {
    font: italic bold 14px "Liberation Serif", serif;
    color: #4b4b4b;
}

.fx sub {
    font-size: 11px;
    line-height: 1;
}

.formula {
    flex: 1;
    padding: 0 4px;
}

.expand {
    width: 16px;
    border-left: 1px solid #6a8fbf;
    background: linear-gradient(#e9f1fb, #b5cdec);
}

/* Worksheet */
.work {
    display: flex;
    flex: 1;
    min-height: 0;
    border-top: 3px solid #dceaf9;
    padding-right: 4px;
}

.sheet {
    flex: 1;
    min-width: 0;
    overflow: hidden;
    background: #fff;
    border-top: 1px solid #6a8fbf;
}

#grid {
    width: 0;
    table-layout: fixed;
    border-collapse: separate;
    border-spacing: 0;
    font-family: Lato, "Open Sans", sans-serif;
    font-size: 13px;
    line-height: 18px;
}

.rowcol {
    width: 26px;
}

#grid th, #grid td {
    height: 20px;
    padding: 1px 0 0;
    border-right: 1px solid #d0d7e5;
    border-bottom: 1px solid #d0d7e5;
    text-align: center;
    white-space: nowrap;
    color: #000;
}

#grid th {
    border-color: #9eb6ce;
    background: #e4ecf7;
    font-weight: normal;
    color: #27413e;
}

#grid thead th {
    background: linear-gradient(#f9fcfd, #d3dbe9);
}

#grid thead .corner {
    background: linear-gradient(135deg, transparent 50%, #dfe9f7 50%) no-repeat 10px 5px / 11px 11px #a9c4e9;
}

#grid thead .sel {
    border-color: #f29536;
    background: linear-gradient(#f9d99f, #f1c15f);
}

#grid tbody .sel {
    border-color: #f29536;
    background: #ffd58d;
}

#grid .cursor {
    position: relative;
}

.cursor::before {
    content: "";
    position: absolute;
    inset: -2px;
    border: 3px solid #000;
}

.cursor::after {
    content: "";
    position: absolute;
    right: -4px;
    bottom: -4px;
    width: 7px;
    height: 7px;
    border: 1px solid #fff;
    background: #000;
}

.vscroll {
    display: flex;
    flex-direction: column;
    width: 15px;
    background: #7f9fcb;
}

.vscroll button {
    height: 17px;
}

.vscroll .split {
    height: 8px;
    border: 1px solid #6a8fbf;
    background: linear-gradient(#6a8fbf, #6a8fbf) center / 7px 1px no-repeat #fff;
}

.track {
    flex: 1;
    display: flex;
}

.vscroll .thumb {
    width: 100%;
    height: 92%;
    border: 1px solid #5f7ba6;
    border-radius: 2px;
    background: repeating-linear-gradient(#6f83a3 0 1px, transparent 1px 2px) center / 7px 7px no-repeat, linear-gradient(90deg, #f2f6fa, #d6dfe9 50%, #abbed8);
}

/* Sheet tabs */
.sheetbar {
    display: flex;
    flex: none;
    height: 17px;
    padding-right: 20px;
    border-top: 1px solid #b9d3f3;
    border-bottom: 1px solid #5c80b4;
    background: linear-gradient(#8caad6, #9fb9df 30%);
}

.sheetnav {
    display: flex;
    width: 63px;
    padding: 0 2px;
    background: #c9def8;
    border-right: 1px solid #7f9fcb;
}

.sheetnav button {
    flex: 1;
    fill: #16448c;
}

.sheettabs {
    display: flex;
    flex: 1;
    padding-left: 1px;
}

.sheettabs button {
    position: relative;
    z-index: 0;
    width: 60px;
    font-size: 12px;
}

.sheettabs button::before {
    content: "";
    position: absolute;
    z-index: -1;
    inset: 0 0 1px;
    transform: skewX(-40deg);
    border-left: 1px solid #fff;
    border-right: 1px solid #7f9fcb;
    background: linear-gradient(#d8e7fb, #a9c6ec);
}

.sheettabs .current {
    font-weight: bold;
}

.sheettabs .current::before {
    background: linear-gradient(#d8e7fb, #fff 70%);
}

.sheettabs .new {
    width: 34px;
}

.hscroll {
    display: flex;
    width: 40%;
    background: #7f9fcb;
}

.hscroll button {
    width: 18px;
}

.hscroll .split {
    width: 7px;
    border: 1px solid #6a8fbf;
    background: linear-gradient(#6a8fbf, #6a8fbf) center / 1px 8px no-repeat #fff;
}

.hscroll .thumb {
    width: 90%;
    border: 1px solid #5f6f8c;
    border-radius: 1px;
    background: repeating-linear-gradient(90deg, #6f7f98 0 1px, transparent 1px 2px) center / 7px 7px no-repeat, linear-gradient(#f2f5f8, #d3dce6 50%, #a9bbd0);
}

/* Status bar */
.status {
    display: flex;
    flex: none;
    justify-content: space-between;
    height: 21px;
    background: linear-gradient(#e3efff, #c9dffa 30%, #b0cdf2 35%, #d9e8fb);
}

.ready {
    width: 47px;
    padding-left: 7px;
    line-height: 20px;
    border-right: 1px solid #8fb0dc;
}

.zoombar {
    display: flex;
    align-items: center;
    padding: 0 5px;
    border-left: 1px solid #6a8fbf;
    background: linear-gradient(#bcd4f3, #a5c2ea 40%, #7fa5d8 45%, #9dbce6);
}

.views {
    display: flex;
    border: 1px solid #7f9fcb;
    border-radius: 2px;
    background: #bdd0e9;
}

.views button {
    width: 18px;
    height: 16px;
}

.views .on {
    background: linear-gradient(#fbd9a0, #fdc04e 50%, #ffe28a);
}

.pctlabel {
    width: 45px;
    text-align: center;
}

.zoombar input {
    width: 100px;
    height: 16px;
    margin: 0 1px;
    appearance: none;
    background: linear-gradient(#dce9fa, #dce9fa) center / 100% 1px no-repeat;
}

.zoombar input::-webkit-slider-thumb {
    appearance: none;
    width: 9px;
    height: 12px;
    border: 1px solid #54709c;
    border-radius: 1px 1px 5px 5px;
    background: #e5edf8;
}

/* Windows taskbar */
.taskbar {
    display: flex;
    flex: none;
    height: 30px;
    background: #1e1f1f;
    color: #fff;
    font-size: 12px;
}

.start {
    display: flex;
    width: 148px;
    background: #000;
}

.start button {
    width: 36px;
}

.task {
    justify-content: flex-start;
    gap: 4px;
    width: 90px;
    margin-right: 8px;
    padding-left: 3px;
    border-bottom: 2px solid #b5cdf5;
    white-space: nowrap;
}

.task.folder {
    margin-right: 5px;
    background: linear-gradient(90deg, #000 25%, #262626 25%);
}

.task.front {
    width: 98px;
    margin: 0 0 0 -3px;
    padding-left: 6px;
    background: #45494c;
}

.pins {
    display: flex;
    flex: 1;
    padding-right: 4px;
}

.pins button {
    flex: 1;
}

.tray {
    display: flex;
    align-items: center;
    padding-left: 3px;
    border-right: 5px solid #000;
    background: linear-gradient(90deg, #181a1c 25%, #000 25%);
}

.tray button {
    width: 24px;
}

.tray .kbd {
    width: 30px;
}

.tray time {
    padding: 0 13px 2px 14px;
    border-right: 1px solid #555;
}
```
